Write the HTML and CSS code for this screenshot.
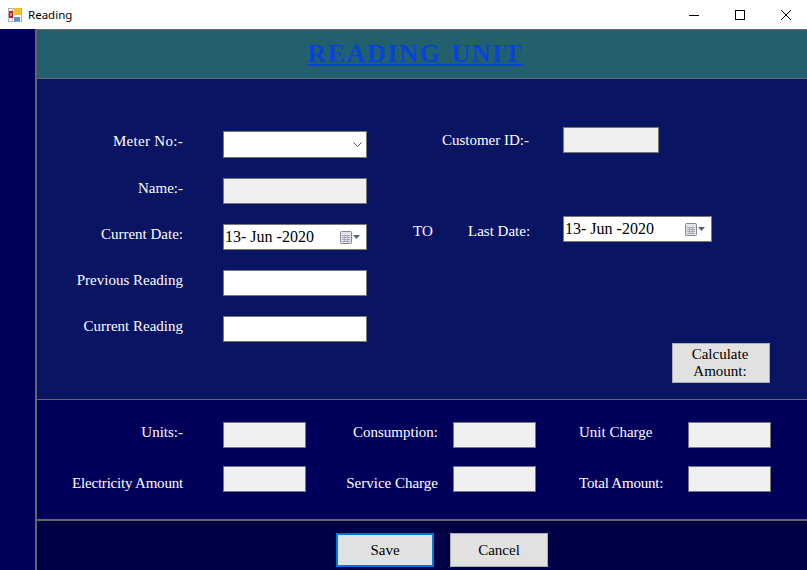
FILE: index.html
```html
<!DOCTYPE html>
<html lang="en">
<head>
  <meta charset="UTF-8" />
  <title>Reading</title>
  <link rel="stylesheet" href="styles.css">
</head>
<body>

<div class="titlebar">
  <svg class="app-icon" width="14" height="14" viewBox="0 0 14 14">
    <rect x="0.500" y="0.500" width="13" height="13" fill="#fff" stroke="#aaa"/>
    <path d="M0 4.500H14M0 9.500H14M4.500 0V14" stroke="#ccc" fill="none"/>
    <rect x="1" y="3" width="4" height="7" fill="#b02020"/>
    <rect x="2" y="5" width="2" height="3" fill="#e88"/>
    <rect x="6" y="0" width="7" height="7" fill="#f0c030"/>
    <rect x="6" y="9" width="6" height="4" fill="#5b8fd8"/>
  </svg>
  <span class="title-text">Reading</span>
  <div class="win-btns">
    <svg width="12" height="12" viewBox="0 0 12 12"><path d="M1 6.500H11" stroke="#000" fill="none"/></svg>
    <svg width="12" height="12" viewBox="0 0 12 12"><rect x="1.500" y="1.500" width="9" height="9" stroke="#000" fill="none"/></svg>
    <svg width="12" height="12" viewBox="0 0 12 12"><path d="M1 1L11 11M11 1L1 11" stroke="#000" fill="none"/></svg>
  </div>
</div>

<div class="window">
  <div class="sidebar"></div>
  <div class="main">
    <div class="header"><h1>READING UNIT</h1></div>

    <div class="reading-panel">
      <div class="col-left">
        <div class="row">
          <label class="loose">Meter No:-</label>
          <div class="combo">
            <svg width="9" height="5" viewBox="0 0 9 5"><path d="M0.500 0.500L4.500 4.500L8.500 0.500" stroke="#555" fill="none"/></svg>
          </div>
        </div>
        <div class="row">
          <label>Name:-</label>
          <div class="field readonly wide"></div>
        </div>
        <div class="row">
          <label>Current Date:</label>
          <div class="date-field">
            <span>13- Jun -2020</span>
            <svg class="cal" width="20" height="13" viewBox="0 0 20 13">
              <rect x="0.500" y="0.500" width="11" height="12" rx="1" fill="#e4e4ea" stroke="#858590"/>
              <path d="M2 4.500H10M2 6.500H10M2 8.500H10M2 10.500H10M4.500 4V11M7.500 4V11" stroke="#a8a8b4"/>
              <path d="M13 4H20L16.500 8Z" fill="#4f6080"/>
            </svg>
          </div>
        </div>
        <div class="row">
          <label>Previous Reading</label>
          <div class="field wide"></div>
        </div>
        <div class="row">
          <label>Current Reading</label>
          <div class="field wide"></div>
        </div>
      </div>

      <div class="col-right">
        <div class="row-cust">
          <label>Customer ID:-</label>
          <div class="field readonly cust"></div>
        </div>
        <div class="row-last">
          <span class="to">TO</span>
          <label>Last Date:</label>
          <div class="date-field">
            <span>13- Jun -2020</span>
            <svg class="cal" width="20" height="13" viewBox="0 0 20 13">
              <rect x="0.500" y="0.500" width="11" height="12" rx="1" fill="#e4e4ea" stroke="#858590"/>
              <path d="M2 4.500H10M2 6.500H10M2 8.500H10M2 10.500H10M4.500 4V11M7.500 4V11" stroke="#a8a8b4"/>
              <path d="M13 4H20L16.500 8Z" fill="#4f6080"/>
            </svg>
          </div>
        </div>
        <button class="btn calc">Calculate Amount:</button>
      </div>
    </div>

    <div class="amount-panel">
      <div class="amount-row">
        <label class="l1">Units:-</label><div class="field readonly small"></div>
        <label class="l2">Consumption:</label><div class="field readonly small"></div>
        <label class="l3">Unit Charge</label><div class="field readonly small"></div>
      </div>
      <div class="amount-row second">
        <label class="l1 tight">Electricity Amount</label><div class="field readonly small"></div>
        <label class="l2">Service Charge</label><div class="field readonly small"></div>
        <label class="l3 tight">Total Amount:</label><div class="field readonly small"></div>
      </div>
    </div>

    <div class="footer">
      <button class="btn save">Save</button>
      <button class="btn cancel">Cancel</button>
    </div>
  </div>
</div>

</body>
</html>
```

FILE: styles.css
```css
html, body {
  margin: 0;
  height: 570px;
  overflow: hidden;
}
body {
  font-family: 'Liberation Serif', 'Times New Roman', serif;
  font-size: 15px;
  color: #fff;
  background: #00005a;
}

/* title bar */
.titlebar {
  height: 29px;
  background: #fff;
  display: flex;
  align-items: center;
  padding-left: 8px;
  color: #000;
  box-sizing: border-box;
}
.app-icon {
  margin-right: 6px;
}
.title-text {
  font-family: 'Noto Sans', 'Liberation Sans', Arial, sans-serif;
  font-size: 11.5px;
}
.win-btns {
  margin-left: auto;
  display: flex;
  gap: 34px;
  margin-right: 15px;
}

.window {
  display: flex;
  height: 541px;
}
.sidebar {
  width: 35px;
  background: #00005a;
}
.main {
  flex: 1;
  border-left: 2px solid #666;
  border-top: 1px solid #666;
  display: flex;
  flex-direction: column;
}

.header {
  height: 48px;
  background: #22606e;
  border-bottom: 1px solid #666;
  display: flex;
  justify-content: center;
  align-items: center;
}
.header h1 {
  margin: 0 14px 0 0;
  color: #0645d8;
  font-size: 26px;
  font-weight: bold;
  letter-spacing: 1.6px;
  word-spacing: 2px;
  text-decoration: underline;
  line-height: 1;
}

/* top form */
.reading-panel {
  height: 321px;
  box-sizing: border-box;
  background: #091463;
  border-bottom: 1px solid #666;
  display: flex;
}
.col-left {
  padding-top: 52px;
  display: flex;
  flex-direction: column;
  gap: 20px;
}
.row {
  display: flex;
  align-items: center;
  gap: 40px;
}
.row label {
  width: 146px;
  text-align: right;
  padding-bottom: 6px;
}
.loose {
  letter-spacing: 0.3px;
}
.field {
  height: 26px;
  box-sizing: border-box;
  background: #fff;
  border: 1px solid #777;
}
.readonly {
  background: #f0f0f0;
}
.wide {
  width: 144px;
}
.cust {
  width: 96px;
}
.small {
  width: 83px;
}
.combo {
  width: 144px;
  height: 27px;
  box-sizing: border-box;
  background: #fff;
  border: 1px solid #777;
  display: flex;
  align-items: center;
  justify-content: flex-end;
  padding-right: 4px;
}
.date-field {
  height: 26px;
  box-sizing: border-box;
  width: 144px;
  background: #fff;
  border: 1px solid #777;
  color: #000;
  font-size: 16px;
  display: flex;
  align-items: center;
  padding-left: 1px;
}
.date-field .cal {
  margin-left: auto;
  margin-right: 6px;
  margin-top: 1px;
}

.col-right {
  padding-top: 48px;
  display: flex;
  flex-direction: column;
}
.row-cust {
  display: flex;
  align-items: center;
}
.row-cust label {
  width: 162px;
  text-align: right;
  margin-right: 34px;
}
.row-last {
  display: flex;
  align-items: center;
  margin-top: 63px;
}
.row-last .to {
  margin-left: 46px;
  width: 55px;
  padding-top: 4px;
}
.row-last label {
  width: 62px;
  margin-right: 33px;
  padding-top: 4px;
  white-space: nowrap;
}
.row-last .date-field {
  width: 149px;
}
.btn {
  font-family: inherit;
  font-size: 15px;
  color: #000;
  background: #e1e1e1;
  border: 1px solid #adadad;
  padding: 0;
  box-sizing: border-box;
}
.calc {
  width: 98px;
  height: 40px;
  margin-top: 101px;
  margin-left: 305px;
  line-height: 17px;
  padding: 0 12px 0 10px;
}

/* amounts */
.amount-panel {
  height: 121px;
  box-sizing: border-box;
  background: #00005a;
  border-bottom: 2px solid #666;
  padding-top: 22px;
  display: flex;
  flex-direction: column;
  gap: 18px;
}
.amount-row {
  display: flex;
  align-items: flex-start;
}
.amount-row label {
  text-align: right;
  padding-top: 2px;
}
.amount-row.second label {
  padding-top: 9px;
}
.l1 {
  width: 146px;
  margin-right: 40px;
}
.tight {
  letter-spacing: -0.2px;
}
.amount-row .l2 {
  width: 132px;
  margin-right: 15px;
}
.amount-row .l3 {
  width: 109px;
  margin-left: 43px;
  text-align: left;
}

/* buttons */
.footer {
  flex: 1;
  background: #000046;
  display: flex;
  padding: 12px 0 0 299px;
  gap: 16px;
  align-items: flex-start;
}
.save, .cancel {
  width: 98px;
  height: 34px;
}
.save {
  border: 2px solid #0078d7;
}
```
